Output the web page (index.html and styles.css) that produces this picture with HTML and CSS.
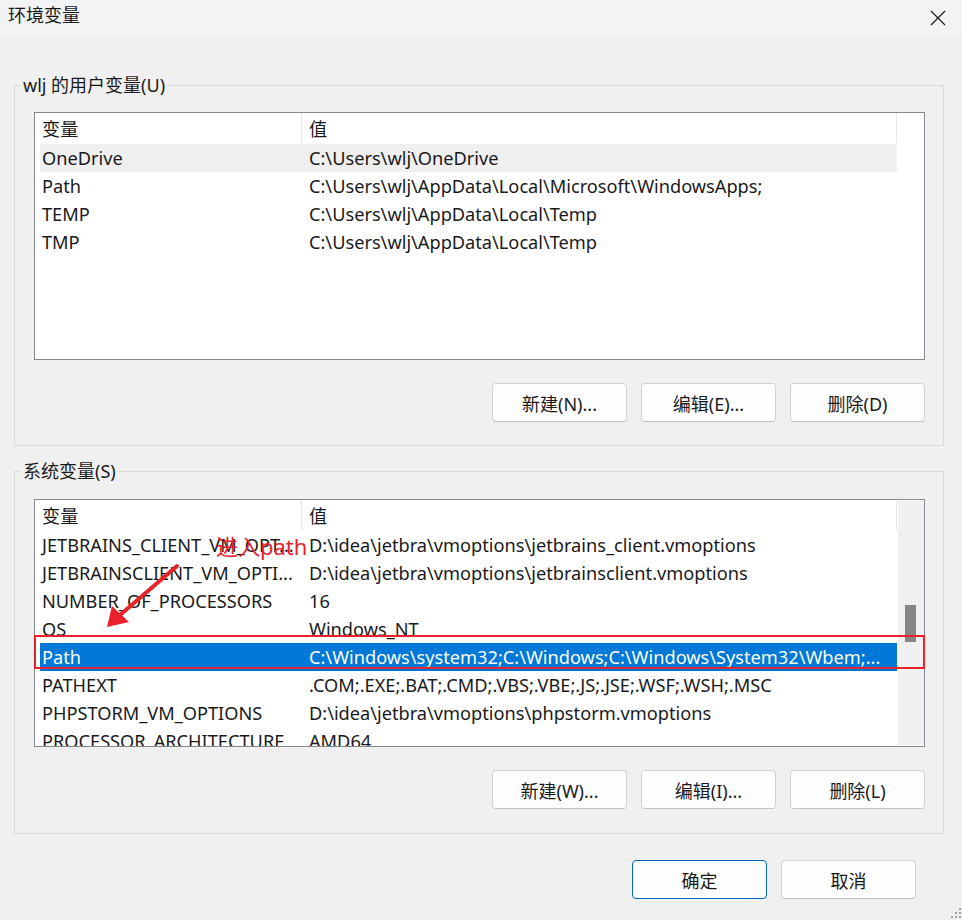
FILE: index.html
```html
<!DOCTYPE html>
<html lang="zh-CN">
<head>
    <meta charset="UTF-8">
    <title>环境变量</title>
    <link rel="stylesheet" href="styles.css">
</head>
<body>
    <div class="window">
        <div class="titlebar">
            <span class="title">环境变量</span>
            <svg class="close" width="16" height="16" viewBox="0 0 16 16">
                <path d="M1 1 L15 15 M15 1 L1 15" stroke="#1a1a1a" stroke-width="1.2" fill="none"/>
            </svg>
        </div>

        <div class="content">
            <fieldset class="group group-user">
                <legend>wlj 的用户变量(U)</legend>
                <div class="list">
                    <div class="list-body">
                        <div class="list-head">
                            <span class="col-name">变量</span>
                            <span class="col-value">值</span>
                        </div>
                        <div class="row hover"><span class="col-name">OneDrive</span><span class="col-value">C:\Users\wlj\OneDrive</span></div>
                        <div class="row"><span class="col-name">Path</span><span class="col-value">C:\Users\wlj\AppData\Local\Microsoft\WindowsApps;</span></div>
                        <div class="row"><span class="col-name">TEMP</span><span class="col-value">C:\Users\wlj\AppData\Local\Temp</span></div>
                        <div class="row"><span class="col-name">TMP</span><span class="col-value">C:\Users\wlj\AppData\Local\Temp</span></div>
                    </div>
                    <div class="scroll empty"></div>
                </div>
                <div class="buttons">
                    <button class="btn">新建(N)...</button>
                    <button class="btn">编辑(E)...</button>
                    <button class="btn">删除(D)</button>
                </div>
            </fieldset>

            <fieldset class="group group-system">
                <legend>系统变量(S)</legend>
                <div class="list">
                    <div class="list-body">
                        <div class="list-head">
                            <span class="col-name">变量</span>
                            <span class="col-value">值</span>
                        </div>
                        <div class="row"><span class="col-name">JETBRAINS_CLIENT_VM_OPT...</span><span class="col-value">D:\idea\jetbra\vmoptions\jetbrains_client.vmoptions</span></div>
                        <div class="row"><span class="col-name">JETBRAINSCLIENT_VM_OPTI...</span><span class="col-value">D:\idea\jetbra\vmoptions\jetbrainsclient.vmoptions</span></div>
                        <div class="row"><span class="col-name">NUMBER_OF_PROCESSORS</span><span class="col-value">16</span></div>
                        <div class="row"><span class="col-name">OS</span><span class="col-value">Windows_NT</span></div>
                        <div class="row selected"><span class="col-name">Path</span><span class="col-value">C:\Windows\system32;C:\Windows;C:\Windows\System32\Wbem;...</span></div>
                        <div class="row"><span class="col-name">PATHEXT</span><span class="col-value">.COM;.EXE;.BAT;.CMD;.VBS;.VBE;.JS;.JSE;.WSF;.WSH;.MSC</span></div>
                        <div class="row"><span class="col-name">PHPSTORM_VM_OPTIONS</span><span class="col-value">D:\idea\jetbra\vmoptions\phpstorm.vmoptions</span></div>
                        <div class="row"><span class="col-name">PROCESSOR_ARCHITECTURE</span><span class="col-value">AMD64</span></div>
                    </div>
                    <div class="scroll">
                        <div class="thumb"></div>
                    </div>

                    <!-- annotation drawn over the screenshot -->
                    <div class="mark-box"></div>
                    <span class="mark-text">进入path</span>
                    <svg class="mark-arrow" width="85" height="72" viewBox="0 0 85 72">
                        <path d="M77 6 L20 55" stroke="#e8212a" stroke-width="4" stroke-linecap="round" fill="none"/>
                        <polygon points="7,67 12,46 29,62" fill="#e8212a"/>
                    </svg>
                </div>
                <div class="buttons">
                    <button class="btn">新建(W)...</button>
                    <button class="btn">编辑(I)...</button>
                    <button class="btn">删除(L)</button>
                </div>
            </fieldset>
        </div>

        <div class="footer">
            <button class="btn default">确定</button>
            <button class="btn">取消</button>
        </div>

        <svg class="grip" width="14" height="13" viewBox="0 0 14 13">
            <rect x="11" y="1" width="2" height="2" fill="#a0a0a0"/>
            <rect x="7" y="5" width="2" height="2" fill="#a0a0a0"/>
            <rect x="11" y="5" width="2" height="2" fill="#a0a0a0"/>
            <rect x="3" y="9" width="2" height="2" fill="#a0a0a0"/>
            <rect x="7" y="9" width="2" height="2" fill="#a0a0a0"/>
            <rect x="11" y="9" width="2" height="2" fill="#a0a0a0"/>
        </svg>
    </div>
</body>
</html>
```

FILE: styles.css
```css
:root {
    --window-bg: #f0f0f0;
    --title-bg: #f2f3f5;
    --text-color: #1a1a1a;
    --list-border: #868a91;
    --group-border: #dadada;
    --divider: #e5e5e5;
    --select-bg: #0078d7;
    --hover-bg: #efefef;
    --accent: #0067c0;
    --mark-red: #e8212a;
}

* {
    box-sizing: border-box;
}

body {
    margin: 0;
    padding: 0;
    background-color: var(--window-bg);
    font-family: "Noto Sans", "Noto Sans CJK SC", sans-serif;
    font-size: 18px;
    color: var(--text-color);
}

.window {
    position: relative;
    width: 962px;
    height: 920px;
    overflow: hidden;
}

.titlebar {
    display: flex;
    justify-content: space-between;
    align-items: flex-start;
    height: 37px;
    padding: 3px 16px 0 8px;
    background-color: var(--title-bg);
    line-height: 24px;
}

.close {
    margin-top: 7px;
}

.content {
    padding: 0 18px 0 14px;
}

.group {
    margin: 36px 0 0 0;
    padding: 0 18px 23px 5px;
    border: 1px solid var(--group-border);
    min-width: 0;
}

.group-system {
    margin-top: 13px;
    padding-bottom: 24px;
}

.group legend {
    padding: 0 3px;
    line-height: 24px;
}

.list {
    position: relative;
    display: flex;
    height: 248px;
    margin: 15px 0 0 14px;
    border: 1px solid var(--list-border);
    background-color: #fff;
}

.group-system .list {
    margin-top: 16px;
}

.list-body {
    flex: 1;
    padding-left: 5px;
    overflow: hidden;
    font-size: 18.2px;
}

.list-head {
    display: flex;
    height: 30px;
    margin-bottom: 1px;
    align-items: center;
    border-right: 1px solid var(--divider);
}

.list-head .col-value {
    align-self: stretch;
    display: flex;
    align-items: center;
    border-left: 1px solid var(--divider);
    padding-left: 7px;
}

.row {
    display: flex;
    align-items: center;
    height: 28px;
    white-space: nowrap;
}

.col-name {
    width: 261px;
    flex-shrink: 0;
    padding-left: 2px;
    overflow: hidden;
    text-overflow: ellipsis;
}

.col-value {
    flex: 1;
    padding-left: 8px;
    overflow: hidden;
    text-overflow: ellipsis;
}

.row.hover {
    background-color: var(--hover-bg);
}

.row.selected {
    background-color: var(--select-bg);
    color: #fff;
}

.scroll {
    width: 27px;
    margin: 1px 0;
    border-left: 1px solid #fff;
    background-color: var(--window-bg);
}

.scroll.empty {
    background-color: #fff;
}

.thumb {
    width: 11px;
    height: 37px;
    margin: 104px 0 0 7px;
    background-color: #858585;
}

.buttons {
    display: flex;
    justify-content: flex-end;
    gap: 14px;
    margin-top: 23px;
}

.btn {
    width: 135px;
    height: 39px;
    padding: 0;
    border: 1px solid #d1d1d1;
    border-bottom-color: #c2c2c2;
    border-radius: 4px;
    background-color: #fdfdfd;
    font-family: inherit;
    font-size: 18px;
    color: var(--text-color);
}

.btn.default {
    border-color: var(--accent);
}

.footer {
    display: flex;
    justify-content: flex-end;
    gap: 14px;
    margin-top: 26px;
    padding-right: 46px;
}

.grip {
    position: absolute;
    right: 0;
    bottom: 0;
}

.mark-box {
    position: absolute;
    left: -1px;
    top: 135px;
    width: 891px;
    height: 34px;
    border: 2px solid var(--mark-red);
}

.mark-text {
    position: absolute;
    left: 181px;
    top: 35px;
    font-size: 22px;
    line-height: 22px;
    color: var(--mark-red);
    white-space: nowrap;
}

.mark-arrow {
    position: absolute;
    left: 65px;
    top: 60px;
}
```
